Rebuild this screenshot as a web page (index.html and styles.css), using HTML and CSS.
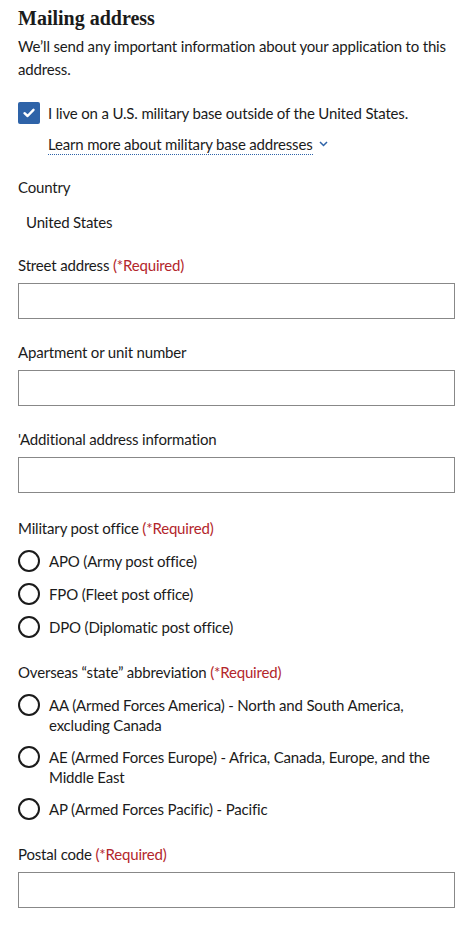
FILE: index.html
```html
<!DOCTYPE html>
<html lang="en">
<head>
    <meta charset="UTF-8">
    <meta name="viewport" content="width=device-width, initial-scale=1.0">
    <title>Mailing address</title>
    <link rel="stylesheet" href="styles.css">
</head>
<body>
    <div class="container">
        <h2 class="title">Mailing address</h2>
        <p class="intro">We’ll send any important information about your application to this address.</p>

        <label class="checkbox">
            <span class="box">
                <svg width="14" height="14" viewBox="0 0 14 14"><path d="M2.5 7.2 L5.6 10 L11.5 3.8" fill="none" stroke="#fff" stroke-width="2.4" stroke-linecap="round" stroke-linejoin="round"/></svg>
            </span>
            <span>I live on a U.S. military base outside of the United States.</span>
        </label>
        <div class="more">
            <span class="more-link">Learn more about military base addresses</span>
            <svg class="chev" width="9" height="6" viewBox="0 0 9 6"><path d="M1 1 L4.5 4.5 L8 1" fill="none" stroke="#2e63a8" stroke-width="1.5"/></svg>
        </div>

        <div class="label first">Country</div>
        <div class="static">United States</div>

        <div class="label gap">Street address <span class="req">(*Required)</span></div>
        <div class="input"></div>

        <div class="label gap">Apartment or unit number</div>
        <div class="input"></div>

        <div class="label gap">'Additional address information</div>
        <div class="input"></div>

        <div class="label group">Military post office <span class="req">(*Required)</span></div>
        <div class="radios">
            <div class="radio"><span class="circle"></span><span class="rtext">APO (Army post office)</span></div>
            <div class="radio"><span class="circle"></span><span class="rtext">FPO (Fleet post office)</span></div>
            <div class="radio"><span class="circle"></span><span class="rtext">DPO (Diplomatic post office)</span></div>
        </div>

        <div class="label group2">Overseas “state” abbreviation <span class="req">(*Required)</span></div>
        <div class="radios">
            <div class="radio"><span class="circle"></span><span class="rtext">AA (Armed Forces America) - North and South America, excluding Canada</span></div>
            <div class="radio"><span class="circle"></span><span class="rtext">AE (Armed Forces Europe) - Africa, Canada, Europe, and the Middle East</span></div>
            <div class="radio"><span class="circle"></span><span class="rtext">AP (Armed Forces Pacific) - Pacific</span></div>
        </div>

        <div class="label group2">Postal code <span class="req">(*Required)</span></div>
        <div class="input"></div>
    </div>
</body>
</html>
```

FILE: styles.css
```css
body {
    margin: 0;
    background: #ffffff;
    color: #1b1b1b;
    font-family: Lato, "Noto Sans", sans-serif;
    font-size: 15px;
    letter-spacing: -0.17px;
}
.container {
    padding: 0 19px 0 18px;
}
.title {
    font-family: "Liberation Serif", serif;
    font-size: 20px;
    line-height: 24px;
    font-weight: bold;
    letter-spacing: 0;
    margin: 6px 0 0;
}
.intro {
    margin: 5px 0 0;
    line-height: 23px;
}
.checkbox {
    display: flex;
    align-items: center;
    gap: 8px;
    margin-top: 21px;
    line-height: 22px;
}
.box {
    width: 22px;
    height: 22px;
    border-radius: 2px;
    background: #2e63a8;
    display: flex;
    align-items: center;
    justify-content: center;
    flex-shrink: 0;
}
.more {
    margin: 10px 0 0 30px;
    line-height: 22px;
    display: flex;
    align-items: center;
    gap: 6px;
}
.more-link {
    border-bottom: 1px dotted #2e63a8;
    line-height: 20px;
}
.chev {
    margin-top: -2px;
}
.label {
    line-height: 22px;
}
.label.first {
    margin-top: 21px;
}
.static {
    margin: 13px 0 0 8px;
    line-height: 22px;
}
.label.gap {
    margin-top: 21px;
}
.input + .label.gap {
    margin-top: 22px;
}
.label.group {
    margin-top: 24px;
}
.label.group2 {
    margin-top: 23px;
}
.req {
    color: #b3262b;
}
.input {
    height: 34px;
    border: 1px solid #888;
    margin-top: 7px;
}
.radios {
    display: flex;
    flex-direction: column;
    gap: 11px;
    margin-top: 11px;
}
.radio {
    display: flex;
    align-items: flex-start;
    gap: 9px;
}
.circle {
    width: 18px;
    height: 18px;
    border: 2px solid #1b1b1b;
    border-radius: 50%;
    flex-shrink: 0;
}
.rtext {
    line-height: 20px;
    margin-top: 1px;
}
```
